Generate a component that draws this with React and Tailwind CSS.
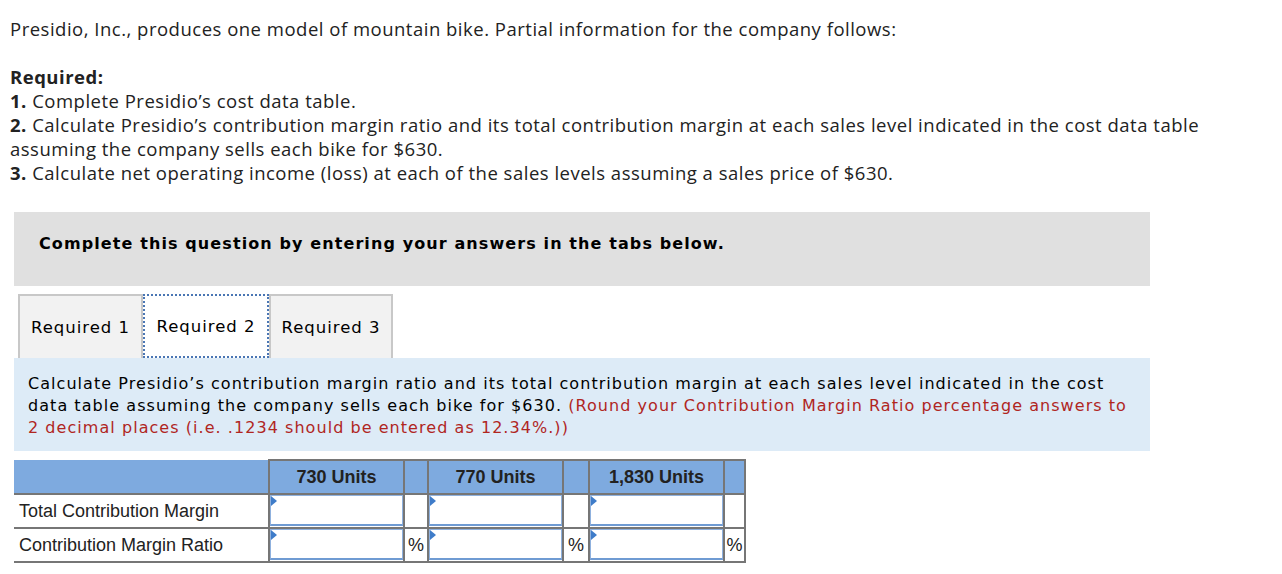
import React from 'react';

const InputCell = ({ w }) => (
  <td className={`${w} h-[34px] border-2 border-[#767676] p-0 align-top`}>
    <div className="relative h-[31px] border border-[#8fb1de] border-b-2 border-b-[#6f9bd3] bg-white">
      <span className="absolute left-0 top-0 h-0 w-0 border-y-[5px] border-l-[6px] border-y-transparent border-l-[#3f7cc9]" />
    </div>
  </td>
);

const PctCell = ({ w, show }) => (
  <td className={`${w} border-2 border-[#767676] text-center align-middle`}>{show ? '%' : ''}</td>
);

const App = () => {
  const units = ['730 Units', '770 Units', '1,830 Units'];
  const pctW = ['w-[24px]', 'w-[26px]', 'w-[21px]'];

  return (
    <div className="w-[1282px] h-[574px] overflow-hidden bg-white text-[#1a1a1a]">
      <div className="pl-[10px] pt-[17px] font-['Open_Sans',sans-serif] text-[18.5px] leading-[24px] tracking-[0.5px] text-[#222]">
        <p>Presidio, Inc., produces one model of mountain bike. Partial information for the company follows:</p>
        <p className="mt-[24px] font-bold">Required:</p>
        <p><b>1.</b> Complete Presidio’s cost data table.</p>
        <p>
          <b>2.</b> Calculate Presidio’s contribution margin ratio and its total contribution margin at each sales level indicated in the cost data table
          <br />
          assuming the company sells each bike for $630.
        </p>
        <p><b>3.</b> Calculate net operating income (loss) at each of the sales levels assuming a sales price of $630.</p>
      </div>

      <div className="ml-[14px] mt-[27px] w-[1136px] font-['DejaVu_Sans',Verdana,sans-serif]">
        <div className="h-[74px] bg-[#e0e0e0] pl-[25px] pt-[22px] text-[16px] leading-[20px] tracking-[1.1px] font-bold text-black">
          Complete this question by entering your answers in the tabs below.
        </div>

        <div className="mt-[8px] flex pl-[4px] text-[16.5px] tracking-[1px] text-black">
          <div className="flex h-[64px] w-[125px] items-center justify-center border-2 border-b-0 border-[#c8c8c8] bg-[#f2f2f2] pt-[3px]">
            Required 1
          </div>
          <div className="flex h-[64px] w-[126px] items-center justify-center border-2 border-dotted border-[#4a76b4] bg-white pt-[3px]">
            Required 2
          </div>
          <div className="flex h-[64px] w-[124px] items-center justify-center border-2 border-b-0 border-[#c8c8c8] bg-[#f2f2f2] pt-[3px]">
            Required 3
          </div>
        </div>

        <div className="bg-[#ddebf7] pl-[14px] pr-[2px] pt-[15px] pb-[12px] text-[16px] tracking-[1.05px] leading-[22px] text-black">
          Calculate Presidio’s contribution margin ratio and its total contribution margin at each sales level indicated in the cost
          <br />
          data table assuming the company sells each bike for $630.{' '}
          <span className="text-[#b0261f]">
            (Round your Contribution Margin Ratio percentage answers to
            <br />
            2 decimal places (i.e. .1234 should be entered as 12.34%.))
          </span>
        </div>

        <table className="mt-[8px] border-collapse font-['Liberation_Sans',Arial,sans-serif] text-[18px] text-[#222]">
          <thead>
            <tr className="h-[34px] bg-[#7eaadf]">
              <th className="w-[255px] border-b-2 border-[#767676]" />
              {units.map((u, i) => (
                <React.Fragment key={u}>
                  <th className="w-[135px] border-2 border-[#767676] text-center font-bold">{u}</th>
                  <th className={`${pctW[i]} border-2 border-[#767676]`} />
                </React.Fragment>
              ))}
            </tr>
          </thead>
          <tbody>
            <tr>
              <td className="border-b-2 border-[#767676] pl-[5px] align-bottom pb-[2px]">Total Contribution Margin</td>
              {units.map((u, i) => (
                <React.Fragment key={u}>
                  <InputCell w="w-[135px]" />
                  <PctCell w={pctW[i]} show={false} />
                </React.Fragment>
              ))}
            </tr>
            <tr>
              <td className="border-b-2 border-[#767676] pl-[5px] align-middle">Contribution Margin Ratio</td>
              {units.map((u, i) => (
                <React.Fragment key={u}>
                  <InputCell w="w-[135px]" />
                  <PctCell w={pctW[i]} show />
                </React.Fragment>
              ))}
            </tr>
          </tbody>
        </table>
      </div>
    </div>
  );
};

export default App;
